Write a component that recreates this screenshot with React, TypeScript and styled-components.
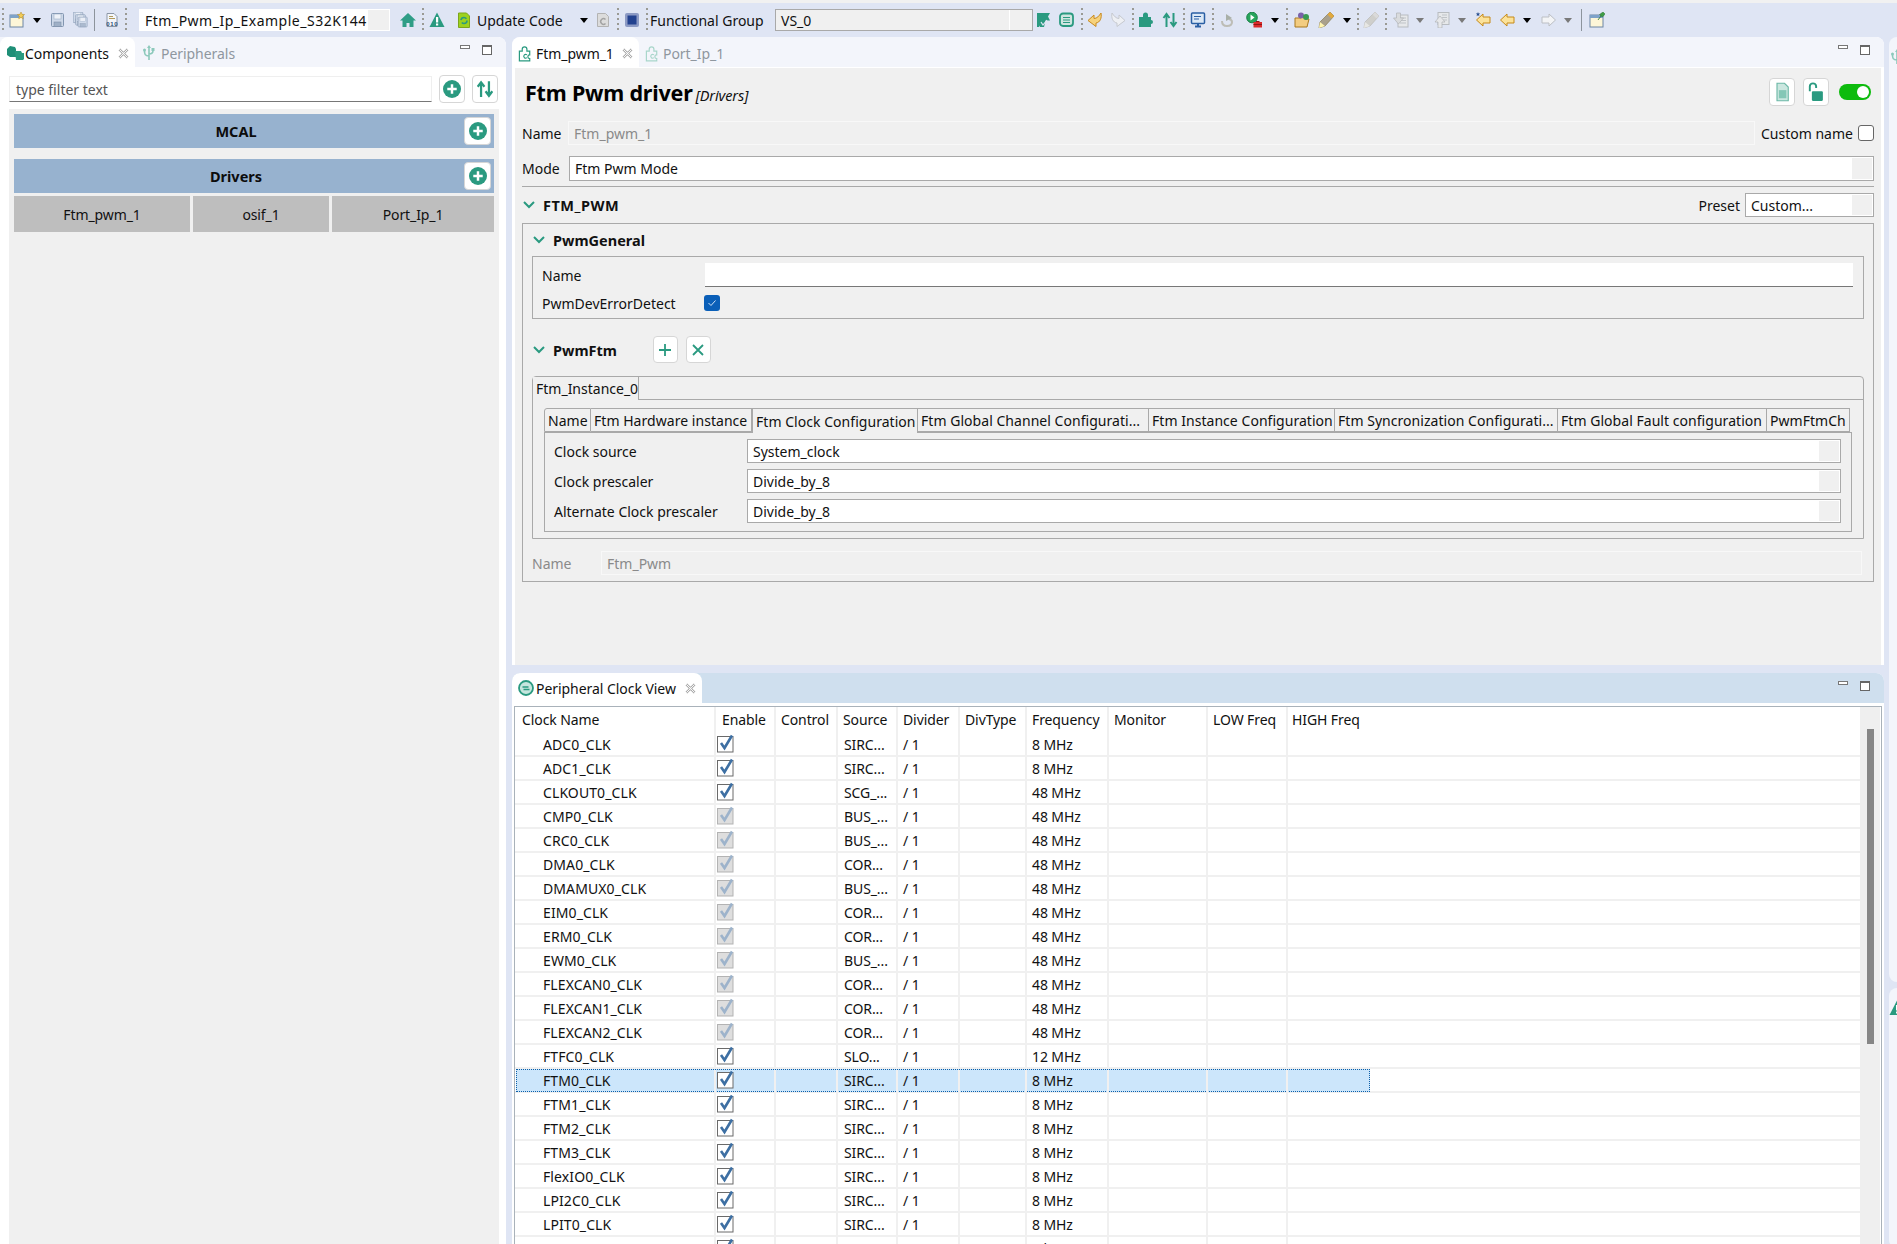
import React from "react";
import styled, { createGlobalStyle } from "styled-components";

const Global = createGlobalStyle`
  html, body { margin: 0; padding: 0; background: #dfe5f4; }
  body { font-family: "Noto Sans", "Open Sans", sans-serif; font-size: 14px; color: #111; }
  * { box-sizing: border-box; }
`;

const TEAL = "#2a9a80";

const Page = styled.div`
  width: 1897px; height: 1244px; overflow: hidden; display: flex; flex-direction: column;
  background: #dfe5f4; border-top: 3px solid #f1f1f1;
`;
const Toolbar = styled.div`
  height: 34px; flex: none; display: flex; align-items: center; padding-left: 2px; white-space: nowrap;
`;
const Slot = styled.span<{ $ml?: number; $w?: number }>`
  flex: none; display: inline-flex; align-items: center;
  margin-left: ${p => p.$ml ?? 0}px; ${p => (p.$w ? `width:${p.$w}px;` : "")}
`;
const Grip = styled.span<{ $ml?: number }>`
  flex: none; width: 2px; height: 24px; margin-left: ${p => p.$ml ?? 0}px;
  background: repeating-linear-gradient(to bottom, #9a9a94 0 2px, transparent 2px 5px);
`;
const Sep = styled.span<{ $ml?: number }>`
  flex: none; width: 1px; height: 22px; background: #8d949c; margin-left: ${p => p.$ml ?? 0}px;
`;
const Caret = styled.span<{ $ml?: number; $off?: boolean }>`
  flex: none; width: 0; height: 0; margin-left: ${p => p.$ml ?? 0}px;
  border-left: 4.5px solid transparent; border-right: 4.5px solid transparent;
  border-top: 5px solid ${p => (p.$off ? "#7a7a7a" : "#000")};
`;
const ToolLabel = styled.span<{ $ml?: number; $w: number }>`
  flex: none; width: ${p => p.$w}px; margin-left: ${p => p.$ml ?? 0}px; font-size: 14px; color: #111;
`;
const ToolCombo = styled.div<{ $ml: number; $w: number; $grey?: boolean }>`
  flex: none; width: ${p => p.$w}px; height: 22px; margin-left: ${p => p.$ml}px;
  display: flex; align-items: center; justify-content: space-between; font-size: 14px;
  background: ${p => (p.$grey ? "#f0f0f0" : "#fff")};
  border: 1px solid ${p => (p.$grey ? "#a9a9a9" : "transparent")};
  padding-left: 5px; overflow: hidden; letter-spacing: ${p => (p.$grey ? 0 : 0.5)}px;
  &::after { content: ""; width: 22px; height: 100%; background: #f0f0f0; border-left: 1px solid #fff; }
`;

const Workspace = styled.div`
  flex: 1; min-height: 0; display: flex;
`;
const LeftPanel = styled.section`
  width: 506px; flex: none; display: flex; flex-direction: column; background: #fff; border-radius: 0 8px 0 0; overflow: hidden;
`;
const RightColumn = styled.div`
  width: 1372px; flex: none; margin-left: 6px; display: flex; flex-direction: column;
`;
const Sliver = styled.div`
  width: 8px; margin-left: 5px; flex: none; display: flex; flex-direction: column; gap: 6px;
`;
const SliverPiece = styled.div<{ $h: number }>`
  height: ${p => p.$h}px; flex: none; background: #f3f5fb; border-radius: 8px 0 0 8px; padding-top: 12px; color: ${TEAL};
`;
const Header = styled.div<{ $active?: boolean }>`
  height: 30px; flex: none; display: flex; align-items: stretch;
  background: ${p => (p.$active ? "#cfdfee" : "#f3f5fb")};
  padding-right: 14px;
`;
const Tab = styled.div<{ $w: number; $on?: boolean; $pt?: number }>`
  width: ${p => p.$w}px; flex: none; display: flex; align-items: center; padding: ${p => p.$pt ?? 2}px 0 0 6px;
  font-size: 14px; letter-spacing: -0.05px; white-space: nowrap;
  color: ${p => (p.$on ? "#111" : "#8f979f")};
  background: ${p => (p.$on ? "#fff" : "transparent")};
  border-radius: ${p => (p.$on ? "8px 8px 0 0" : "0")};
  svg { flex: none; }
`;
const TabText = styled.span<{ $ml?: number }>`
  margin-left: ${p => p.$ml ?? 4}px;
`;
const CloseMark = styled.svg<{ $ml: number }>`
  margin-left: ${p => p.$ml}px;
`;
const PanelControls = styled.div`
  margin-left: auto; display: flex; align-items: flex-start; gap: 12px; padding-top: 8px;
`;
const MinBtn = styled.span`
  width: 10px; height: 4px; border: 1px solid #777; background: #fff;
`;
const MaxBtn = styled.span`
  width: 10px; height: 10px; border: 1px solid #666; border-top-width: 2px; background: #fff;
`;

const FilterRow = styled.div`
  height: 42px; flex: none; display: flex; align-items: flex-start; padding: 9px 0 0 9px;
`;
const FilterInput = styled.div`
  width: 423px; height: 26px; display: flex; align-items: center; padding-left: 6px;
  background: #fff; border: 1px solid #efefef; border-bottom: 1px solid #777; color: #555; font-size: 14px;
`;
const IconButton = styled.span<{ $ml?: number; $w?: number; $h?: number }>`
  flex: none; display: inline-flex; align-items: center; justify-content: center;
  width: ${p => p.$w ?? 26}px; height: ${p => p.$h ?? 28}px; margin-left: ${p => p.$ml ?? 0}px;
  background: #fff; border: 1px solid #d6d6d6; border-radius: 4px;
`;
const FilterButtons = styled.div`
  display: flex; margin-top: -1px;
`;
const ComponentList = styled.div`
  flex: 1; margin: 0 7px 0 9px; background: #f0f0f0; padding: 5px; display: flex; flex-direction: column;
`;
const CategoryBar = styled.div<{ $mt?: number }>`
  height: 34px; flex: none; margin-top: ${p => p.$mt ?? 0}px; position: relative; display: flex; align-items: center; justify-content: center;
  background: #97b2cf; font-weight: 700; font-size: 14.5px; color: #0c0c0c; padding-right: 36px;
  & > span:last-child { position: absolute; right: 3px; top: 3px; }
`;
const CellRow = styled.div`
  display: flex; gap: 3px; margin-top: 3px;
`;
const CompCell = styled.div<{ $w: number }>`
  width: ${p => p.$w}px; height: 36px; display: flex; align-items: center; justify-content: center;
  background: #bebebe; font-size: 14px; letter-spacing: -0.1px;
`;

const EditorPanel = styled.section`
  height: 628px; flex: none; display: flex; flex-direction: column; background: #fff; border-radius: 8px 8px 0 0; overflow: hidden;
`;
const EditorBody = styled.div`
  flex: 1; margin: 1px 3px 0 3px; background: #f0f0f0; padding: 0 7px; display: flex; flex-direction: column;
`;
const TitleRow = styled.div`
  height: 28px; margin-top: 10px; flex: none; display: flex; align-items: center; padding-left: 3px;
`;
const TitleGroup = styled.div`
  display: flex; align-items: center; padding-top: 1px;
`;
const Title = styled.h1`
  margin: 0; font-size: 21.5px; font-weight: 700; letter-spacing: -0.2px; color: #000;
`;
const TitleTag = styled.em`
  margin: 4px 0 0 3px; font-size: 14.5px; letter-spacing: -0.1px;
`;
const TitleActions = styled.div`
  margin-left: auto; display: flex; align-items: center; gap: 8px; padding-right: 3px;
`;
const Toggle = styled.span`
  width: 32px; height: 16px; border-radius: 8px; background: #0dbb0d; margin-left: 2px; display: flex; justify-content: flex-end; align-items: center; padding-right: 2px;
  &::after { content: ""; width: 12px; height: 12px; background: #fff; border-radius: 50%; }
`;
const FormRow = styled.div<{ $mt: number; $h?: number }>`
  display: flex; align-items: center; flex: none; margin-top: ${p => p.$mt}px; height: ${p => p.$h ?? 24}px;
`;
const Label = styled.span<{ $w?: number; $grey?: boolean; $pl?: number }>`
  flex: none; ${p => (p.$w ? `width:${p.$w}px;` : "")} padding-left: ${p => p.$pl ?? 0}px;
  font-size: 14px; color: ${p => (p.$grey ? "#8a8a8a" : "#111")}; white-space: nowrap;
`;
const PresetLabel = styled(Label)`
  margin-left: auto;
`;
const ReadField = styled.div<{ $w?: number; $ml?: number }>`
  ${p => (p.$w ? `width:${p.$w}px;` : "flex:1;")} margin-left: ${p => p.$ml ?? 0}px; height: 24px; display: flex; align-items: center; padding-left: 5px;
  background: #f0f0f0; border: 1px solid #f8f8f8; color: #8a8a8a; font-size: 14px;
`;
const Select = styled.div<{ $w?: number; $ml?: number; $h?: number }>`
  ${p => (p.$w ? `width:${p.$w}px;flex:none;` : "flex:1;")} margin-left: ${p => p.$ml ?? 0}px; height: ${p => p.$h ?? 24}px;
  display: flex; align-items: center; justify-content: space-between; padding-left: 5px; padding-right: 1px;
  background: #fff; border: 1px solid #a9a9a9; font-size: 14px; color: #111;
  &::after { content: ""; width: 20px; height: calc(100% - 2px); background: #f0f0f0; }
`;
const CustomCheck = styled.span`
  width: 16px; height: 16px; border: 1px solid #666; border-radius: 3px; background: #fff; flex: none;
`;
const Rule = styled.div`
  height: 1px; flex: none; margin-top: 5px; background: #a9a9a9;
`;
const SectionHead = styled.div<{ $mt?: number; $h?: number }>`
  display: flex; align-items: center; flex: none; height: ${p => p.$h ?? 24}px; margin-top: ${p => p.$mt ?? 0}px; font-weight: 700; font-size: 14.5px; color: #111; padding-left: 1px;
`;
const HeadText = styled.span<{ $ls?: number }>`
  margin-left: 8px; letter-spacing: ${p => p.$ls ?? 0}px;
`;
const OuterFrame = styled.div`
  height: 359px; flex: none; margin-top: 6px; border: 1px solid #a9a9a9; padding: 4px 9px 0 9px; display: flex; flex-direction: column;
`;
const GeneralBox = styled.div`
  height: 63px; flex: none; margin-top: 4px; border: 1px solid #a9a9a9; padding: 6px 10px 0 9px; display: flex; flex-direction: column;
`;
const TextInput = styled.div`
  flex: 1; height: 24px; background: #fff; border-bottom: 1px solid #777;
`;
const BlueCheck = styled.span`
  width: 16px; height: 16px; margin-left: -1px; border-radius: 3px; background: #0a5fb8; display: inline-flex; align-items: center; justify-content: center; flex: none;
`;
const Folder = styled.div`
  height: 163px; flex: none; margin-top: 13px; border: 1px solid #a9a9a9; border-radius: 4px 4px 0 0; display: flex; flex-direction: column;
`;
const FolderStrip = styled.div`
  height: 23px; flex: none; display: flex; border-bottom: 1px solid #a9a9a9;
`;
const FolderTab = styled.div`
  width: 106px; height: 23px; display: flex; align-items: center; padding-left: 3px; border-right: 1px solid #a9a9a9; background: #f0f0f0; font-size: 14px;
`;
const FolderBody = styled.div`
  padding: 8px 11px 0 11px;
`;
const InnerTabs = styled.div`
  display: flex; height: 25px;
`;
const InnerTab = styled.div<{ $w: number; $on?: boolean }>`
  width: ${p => p.$w}px; flex: none; height: ${p => (p.$on ? 25 : 24)}px; display: flex; align-items: center; padding-left: 3px; overflow: hidden; white-space: nowrap;
  border: 1px solid #a9a9a9; border-left-width: ${p => (p.$on ? 1 : 0)}px; border-bottom-width: ${p => (p.$on ? 0 : 1)}px;
  background: #f0f0f0; position: relative; font-size: 14px; letter-spacing: 0.04px;
  &:first-child { border-left-width: 1px; border-radius: 3px 0 0 0; }
`;
const InnerFrame = styled.div`
  height: 100px; margin-top: -1px; border: 1px solid #a9a9a9; border-top-color: #a9a9a9; padding: 6px 10px 0 9px; display: flex; flex-direction: column; gap: 6px;
`;
const InnerRow = styled.div`
  display: flex; align-items: center; height: 24px;
`;

const ClockPanel = styled.section`
  flex: 1; min-height: 0; margin-top: 8px; display: flex; flex-direction: column; background: #fff; border-radius: 8px 8px 0 0; overflow: hidden;
`;
const TableFrame = styled.div`
  flex: 1; min-height: 0; margin: 3px 2px 0 2px; border: 1px solid #a9b2ba; border-bottom: 0; display: flex; overflow: hidden;
`;
const Table = styled.div`
  flex: 1; min-width: 0; display: flex; flex-direction: column; padding-left: 0;
`;
const HeadRow = styled.div`
  height: 26px; flex: none; display: flex;
`;
const Row = styled.div`
  height: 24px; flex: none; display: flex; position: relative; border-bottom: 2px solid #f0f0f0;
`;
const SelBand = styled.div`
  display: flex; height: 23px; margin: 0 0 -1px 1px; background: #cce6fb; border: 1px dotted #0d5fa8; align-items: center;
  & > div:first-child { width: 199px; padding-left: 26px; }
  & > div:last-child { width: 81px; }
`;
const Cell = styled.div<{ $w: number; $pl?: number; $head?: boolean; $last?: boolean }>`
  width: ${p => p.$w}px; flex: none; height: ${p => (p.$head ? "26px" : "22px")}; display: flex; align-items: center; padding: 0 0 ${p => (p.$head ? 2 : 0)}px ${p => p.$pl ?? 0}px;
  border-right: ${p => (p.$last ? "0" : "2px solid #f0f0f0")}; white-space: nowrap; overflow: hidden; font-size: 14px; letter-spacing: -0.1px; color: #111;
`;
const NameCell = styled(Cell)`
  letter-spacing: 0.1px;
`;
const CheckWrap = styled.span`
  display: inline-flex; margin-top: -2px;
`;
const ScrollTrack = styled.div`
  width: 20px; flex: none; background: #efefef; padding: 22px 6px 0 7px; margin-right: 1px;
`;
const ScrollThumb = styled.div`
  width: 7px; height: 315px; background: #868686;
`;

const I = ({ children, w = 16, h = 16 }: { children: React.ReactNode; w?: number; h?: number }) => (
  <svg width={w} height={h} viewBox="0 0 16 16">{children}</svg>
);

const NewIcon = () => <I><rect x="1" y="3" width="13" height="12" fill="#fdf6d8" stroke="#6d86a4" /><rect x="1" y="3" width="13" height="3" fill="#7ea2c8" /><path d="M12 0l1 2.3 2.6.2-2 1.7.7 2.6L12 5.4 9.700 6.800l.7-2.600-2-1.700 2.600-.2z" fill="#f4cc55" stroke="#b28a2a" strokeWidth=".5" /></I>;
const SaveIcon = () => <g><rect x="1.500" y="1.500" width="12" height="13" rx="1" fill="#ced9e9" stroke="#8296b0" /><rect x="4" y="2" width="7" height="5" fill="#eef2f8" stroke="#9db0c6" strokeWidth=".6" /><rect x="4" y="10" width="7" height="4.500" fill="#9fb0c6" stroke="#7d90a8" strokeWidth=".6" /></g>;
const SaveAllIcon = () => <I><g opacity=".8"><g transform="translate(-1 -1) scale(.8)"><SaveIcon /></g><g transform="translate(1.500 1.500) scale(.8)"><SaveIcon /></g><g transform="translate(4 4) scale(.75)"><SaveIcon /></g></g></I>;
const BinaryIcon = () => <I><path d="M3 1.500h7l3 3v10H3z" fill="#f4f6fa" stroke="#8c97a6" /><path d="M5 4.500h4M5 6.500h6" stroke="#b19a5b" /><text x="2.200" y="13.500" fontSize="6" fontFamily="Liberation Sans" fontWeight="700" fill="#2c4e78" textLength="11.500">010</text></I>;
const HomeIcon = () => <I><path d="M8 1L0 8.500h2.500V15h4v-4h3v4h4V8.500H16z" fill="#2f9d86" /></I>;
const WarnIcon = () => <I><path d="M8 .5L.500 15h15z" fill="#2a9a80" /><rect x="7" y="5" width="2.200" height="5.500" fill="#fff" /><rect x="7" y="11.500" width="2.200" height="2" fill="#fff" /></I>;
const UpdateIcon = () => <I><path d="M2.500 1h8l3 3v11.500h-11z" fill="#9ed21e" stroke="#7da51c" /><circle cx="8" cy="8.500" r="3" fill="none" stroke="#2a9a80" strokeWidth="1.600" strokeDasharray="7 2.500" /></I>;
const CDocIcon = () => <I><path d="M2.500 1.500h8l3 3v10h-11z" fill="#dcdcdc" stroke="#b3b3b3" /><path d="M10.500 7.500a2.800 2.800 0 1 0 0 4" fill="none" stroke="#a3a3a3" strokeWidth="1.500" /></I>;
const ChipIcon = () => <I><rect x="1" y="1" width="14" height="14" rx="2" fill="#8c9ac4" /><rect x="3.500" y="3.500" width="9" height="9" fill="#22418f" /></I>;
const FlagIcon = () => <I><path d="M1 1h13l-2 3.500L14 8.500H9.500L8 15H4l-1-1.500V15H1z" fill="#2a9a80" /><path d="M5 10l2 3 4-5" fill="none" stroke="#dfe5f4" strokeWidth="1.200" /></I>;
const DocIcon = () => <I><rect x="1" y="1.500" width="13" height="12.500" rx="3" fill="#cfe5e0" stroke="#2a9a80" strokeWidth="1.800" /><path d="M4 5.500h7M4 8h7M4 10.500h7" stroke="#2a9a80" /></I>;
const BackArrow = () => <I><path d="M14 1C15 6 13 10.500 9 11v3.500L1 8.500 7 3v3.500C10 6.500 12 4 14 1z" fill="#f6d27c" stroke="#c98a1e" /></I>;
const ForwardFaded = () => <I><path d="M2 1C1 6 3 10.500 7 11v3.500L15 8.500 9 3v3.500C6 6.500 4 4 2 1z" fill="#eef0f4" stroke="#c6c9cf" /></I>;
const PuzzleIcon = () => <I><path d="M1 5h4V3a2.500 2.500 0 0 1 5 0v2h3v3a2 2 0 0 1 0 4v3H1z" fill={TEAL} /></I>;
const SortIcon = ({ s = 16 }: { s?: number }) => <I w={s} h={s}><path d="M4.500 15V3M1.500 6l3-4 3 4M11.500 1v12M8.500 10l3 4 3-4" fill="none" stroke={TEAL} strokeWidth="2" /></I>;
const MonitorIcon = () => <I><rect x="1.500" y="1" width="13" height="10.500" rx="1" fill="#dbe8f6" stroke="#2a5fa4" strokeWidth="1.500" /><path d="M4 4.500h7M4 7h5" stroke="#2a5fa4" /><path d="M5 14.500h6M8 11.500v3" stroke="#2a5fa4" strokeWidth="2" /></I>;
const ReplayIcon = () => <I><path d="M3 9c0 3 2 5 5 5s5-1.500 5-4c0-1.500-1-2.500-3-3" fill="none" stroke="#bdbdb6" strokeWidth="2" /><path d="M7 2l6 4-6 3z" fill="#a9b0a8" /></I>;
const RunIcon = () => <I><circle cx="6" cy="5.500" r="5.300" fill="#27a55c" stroke="#197f46" /><path d="M4.500 2.500l4 3-4 3z" fill="#fff" /><rect x="7.500" y="10" width="8.500" height="5.500" fill="#d92b2b" /><path d="M7.500 12.500h8.500M10 9.500h3.500" stroke="#8f1414" /></I>;
const FolderIcon = () => <I><path d="M1 6h6l1-1.500h3V7h4l-2 8H1z" fill="#f3cc80" stroke="#a9781e" /><circle cx="7" cy="3.500" r="3" fill="#7a62a8" /><circle cx="12" cy="5" r="3" fill="#3a9a52" /></I>;
const PenIcon = ({ off }: { off?: boolean }) => <I><path d="M12 0l4 4L7 14 1 16l1-6z" fill={off ? "#cfcfcc" : "#a9a08c"} stroke={off ? "#b9b9b6" : "#8a7d52"} strokeWidth=".7" /><path d="M9.500 2.500l4 4L16 4l-4-4z" fill={off ? "#dadada" : "#e3a93c"} /><path d="M1 16l1-6 5 4z" fill={off ? "#e7e7e4" : "#fff5b0"} /></I>;
const DownDoc = () => <I><rect x="5" y="3" width="10" height="12" fill="#e6e8ea" stroke="#b8bcc0" /><path d="M7 6h6M7 8.500h6M7 11h6" stroke="#bfc3c7" /><path d="M4 0h4v5h3l-5 6-5-6h3z" transform="translate(-.5 1)" fill="#d9dbdd" stroke="#b0b3b6" strokeWidth=".7" /></I>;
const UpDoc = () => <I><rect x="4" y="0.500" width="11" height="12" fill="#e6e8ea" stroke="#b8bcc0" /><path d="M8 3h5M8 5.500h5M9 8h4" stroke="#bfc3c7" /><path d="M4 16V10H1l5-6 5 6H8v6z" fill="#e7e8ea" stroke="#b0b3b6" strokeWidth=".7" /></I>;
const LeftArrow = ({ star }: { star?: boolean }) => <I><path d="M15 5v6H8v3L1.500 8 8 2v3z" fill="#fbe29a" stroke="#c78a16" />{star && <path d="M3 0l.6 1.500 1.600.1-1.200 1 .4 1.600L3 3.300l-1.400.9.4-1.600-1.200-1 1.600-.1z" fill="#2a4f8f" />}</I>;
const RightArrow = () => <I><path d="M1 5v6h7v3l6.500-6L8 2v3z" fill="#f3f4f6" stroke="#bcbfc4" /></I>;
const NoteIcon = () => <I><rect x="1" y="3" width="13" height="12" fill="#fdf6d8" stroke="#6d86a4" /><rect x="1" y="3" width="13" height="3" fill="#7ea2c8" /><path d="M9 8l3-4-1.500-1.500L14 0l2 2-2.500 3L12 4z" fill="#3f9d45" stroke="#25712b" strokeWidth=".5" /></I>;
const PlusCircle = () => <I w={18} h={18}><circle cx="8" cy="8" r="8" fill={TEAL} /><path d="M8 3.800v8.400M3.800 8h8.400" stroke="#fff" strokeWidth="2.200" /></I>;
const Chevron = () => <svg width="12" height="8" viewBox="0 0 12 8"><path d="M1 1l5 5 5-5" fill="none" stroke={TEAL} strokeWidth="2" /></svg>;
const Close = ({ ml }: { ml: number }) => <CloseMark $ml={ml} width="11" height="11" viewBox="0 0 12 12"><path d="M1.500 1.500l9 9M10.500 1.500l-9 9" stroke="#8a8a8a" strokeWidth="2.400" /><path d="M1.500 1.500l9 9M10.500 1.500l-9 9" stroke="#fff" strokeWidth="1.100" /></CloseMark>;
const CompIcon = () => <I w={18} h={16}><path d="M0 4l3-3 5 1 1 2v8H3L0 10z" fill="#1f8f77" /><path d="M8 6h6l1 2h3v5l-2 2H9z" fill="#2a9a80" /></I>;
const UsbIcon = () => <I><path d="M8 15V3M8 11C4 11 3.500 9 3.500 6M8 9c3.500 0 4-1.500 4-3.500" fill="none" stroke="#8cc9bb" strokeWidth="1.600" /><path d="M8 0l2 3H6z" fill="#8cc9bb" /><circle cx="3.500" cy="5" r="1.500" fill="#8cc9bb" /><rect x="10.500" y="3" width="3" height="3" fill="#8cc9bb" /></I>;
const PuzzleDoc = ({ off }: { off?: boolean }) => { const c = off ? "#a9d6cb" : TEAL; return <I w={15} h={18}><path d="M1.500 5h3V3a2.500 2.500 0 0 1 5 0v2h3v4a2 2 0 0 0 0 4v2.500h-11z" transform="translate(0 1)" fill="none" stroke={c} strokeWidth="1.300" /><path d="M9.500 10a2 2 0 1 0 0 3" fill="none" stroke={c} strokeWidth="1.200" /></I>; };
const ClockIcon = () => <I><circle cx="8" cy="8" r="7" fill="#c5e6de" stroke={TEAL} strokeWidth="1.800" /><path d="M4.500 7h6M5.500 9.500h6" stroke={TEAL} strokeWidth="1.300" /></I>;
const SheetIcon = () => <I w={20} h={20}><path d="M4 1h6l3 3v11H4z" fill="#cbe7e0" stroke="#6bb8a6" strokeWidth=".9" /><rect x="5.500" y="6.500" width="6" height="6.500" fill="#84c7b6" /></I>;
const LockOpenIcon = () => <I w={22} h={22}><path d="M3.500 7.500V4a2.300 2.300 0 0 1 4.600 0v1" fill="none" stroke={TEAL} strokeWidth="1.400" /><rect x="5" y="7.500" width="8" height="7" rx=".8" fill={TEAL} /></I>;
const TableCheck = ({ off }: { off?: boolean }) => (
  <svg width="18" height="19" viewBox="0 0 18 19">
    <rect x=".5" y="2.500" width="15.500" height="15.500" fill={off ? "#dedede" : "#fff"} stroke={off ? "#b3b3b3" : "#6a6a6a"} />
    <path d="M4 9l3.500 5L15 1.500" fill="none" stroke={off ? "#9db3cb" : "#3d6fa3"} strokeWidth="2.600" />
  </svg>
);

const widths = [201, 60, 62, 60, 62, 67, 82, 99, 80, 82];
const heads = ["Clock Name", "Enable", "Control", "Source", "Divider", "DivType", "Frequency", "Monitor", "LOW Freq", "HIGH Freq"];
const pads = [7, 6, 5, 5, 5, 5, 5, 5, 5, 4];

type R = [string, string, string, boolean, string?];
const rows: R[] = [
  ["ADC0_CLK", "SIRC...", "8 MHz", false],
  ["ADC1_CLK", "SIRC...", "8 MHz", false],
  ["CLKOUT0_CLK", "SCG_...", "48 MHz", false],
  ["CMP0_CLK", "BUS_...", "48 MHz", true],
  ["CRC0_CLK", "BUS_...", "48 MHz", true],
  ["DMA0_CLK", "COR...", "48 MHz", true],
  ["DMAMUX0_CLK", "BUS_...", "48 MHz", true],
  ["EIM0_CLK", "COR...", "48 MHz", true],
  ["ERM0_CLK", "COR...", "48 MHz", true],
  ["EWM0_CLK", "BUS_...", "48 MHz", true],
  ["FLEXCAN0_CLK", "COR...", "48 MHz", true],
  ["FLEXCAN1_CLK", "COR...", "48 MHz", true],
  ["FLEXCAN2_CLK", "COR...", "48 MHz", true],
  ["FTFC0_CLK", "SLO...", "12 MHz", false],
  ["FTM0_CLK", "SIRC...", "8 MHz", false],
  ["FTM1_CLK", "SIRC...", "8 MHz", false],
  ["FTM2_CLK", "SIRC...", "8 MHz", false],
  ["FTM3_CLK", "SIRC...", "8 MHz", false],
  ["FlexIO0_CLK", "SIRC...", "8 MHz", false],
  ["LPI2C0_CLK", "SIRC...", "8 MHz", false],
  ["LPIT0_CLK", "SIRC...", "8 MHz", false],
  ["LPO_1K_CLK", "LPO...", "1 kHz", false, "/ 100"],
];

const innerTabs: [string, number, boolean?][] = [
  ["Name", 47], ["Ftm Hardware instance", 161], ["Ftm Clock Configuration", 166, true],
  ["Ftm Global Channel Configurati...", 231], ["Ftm Instance Configuration", 186], ["Ftm Syncronization Configurati...", 223],
  ["Ftm Global Fault configuration", 209], ["PwmFtmCh", 83],
];

const Controls = () => <PanelControls><MinBtn /><MaxBtn /></PanelControls>;

const ClockRow = ({ r }: { r: R }) => {
  const cells = (
    <>
      <NameCell $w={widths[0]} $pl={28}>{r[0]}</NameCell>
      <Cell $w={widths[1]} $pl={1}><CheckWrap><TableCheck off={r[3]} /></CheckWrap></Cell>
      <Cell $w={widths[2]} />
      <Cell $w={widths[3]} $pl={6}>{r[1]}</Cell>
      <Cell $w={widths[4]} $pl={5}>{r[4] ?? "/ 1"}</Cell>
      <Cell $w={widths[5]} />
      <Cell $w={widths[6]} $pl={5}>{r[2]}</Cell>
      <Cell $w={widths[7]} />
      <Cell $w={widths[8]} />
      <Cell $w={widths[9]} $last />
    </>
  );
  return <Row>{r[0] === "FTM0_CLK" ? <SelBand>{cells}</SelBand> : cells}</Row>;
};

export default function App() {
  return (
    <Page>
      <Global />
      <Toolbar>
        <Grip />
        <Slot $ml={5}><NewIcon /></Slot>
        <Caret $ml={8} />
        <Slot $ml={9}><I><SaveIcon /></I></Slot>
        <Slot $ml={7}><SaveAllIcon /></Slot>
        <Sep $ml={5} />
        <Slot $ml={9}><BinaryIcon /></Slot>
        <Grip $ml={5} />
        <ToolCombo $ml={12} $w={251}>Ftm_Pwm_Ip_Example_S32K144</ToolCombo>
        <Slot $ml={10}><HomeIcon /></Slot>
        <Grip $ml={6} />
        <Slot $ml={5}><WarnIcon /></Slot>
        <Slot $ml={11}><UpdateIcon /></Slot>
        <ToolLabel $ml={5} $w={86}>Update Code</ToolLabel>
        <Caret $ml={17} />
        <Slot $ml={7}><CDocIcon /></Slot>
        <Grip $ml={6} />
        <Slot $ml={5}><ChipIcon /></Slot>
        <Grip $ml={6} />
        <ToolLabel $ml={2} $w={112}>Functional Group</ToolLabel>
        <ToolCombo $ml={13} $w={258} $grey>VS_0</ToolCombo>
        <Slot $ml={3}><FlagIcon /></Slot>
        <Slot $ml={7}><DocIcon /></Slot>
        <Grip $ml={6} />
        <Slot $ml={4}><BackArrow /></Slot>
        <Slot $ml={7}><ForwardFaded /></Slot>
        <Grip $ml={6} />
        <Slot $ml={4}><PuzzleIcon /></Slot>
        <Slot $ml={8}><SortIcon /></Slot>
        <Grip $ml={5} />
        <Slot $ml={5}><MonitorIcon /></Slot>
        <Grip $ml={6} />
        <Slot $ml={5}><ReplayIcon /></Slot>
        <Slot $ml={11}><RunIcon /></Slot>
        <Caret $ml={9} />
        <Grip $ml={7} />
        <Slot $ml={6}><FolderIcon /></Slot>
        <Slot $ml={8}><PenIcon /></Slot>
        <Caret $ml={9} />
        <Grip $ml={6} />
        <Slot $ml={4}><PenIcon off /></Slot>
        <Grip $ml={6} />
        <Slot $ml={6}><DownDoc /></Slot>
        <Caret $ml={7} $off />
        <Slot $ml={10}><UpDoc /></Slot>
        <Caret $ml={8} $off />
        <Slot $ml={9}><LeftArrow star /></Slot>
        <Slot $ml={8}><LeftArrow /></Slot>
        <Caret $ml={8} />
        <Slot $ml={10}><RightArrow /></Slot>
        <Caret $ml={7} $off />
        <Sep $ml={9} />
        <Slot $ml={7}><NoteIcon /></Slot>
      </Toolbar>
      <Workspace>
        <LeftPanel>
          <Header>
            <Tab $w={135} $on><CompIcon /><TabText $ml={1}>Components</TabText><Close ml={9} /></Tab>
            <Tab $w={120}><UsbIcon /><TabText>Peripherals</TabText></Tab>
            <Controls />
          </Header>
          <FilterRow>
            <FilterInput>type filter text</FilterInput>
            <FilterButtons>
              <IconButton $ml={7}><PlusCircle /></IconButton>
              <IconButton $ml={7}><SortIcon s={18} /></IconButton>
            </FilterButtons>
          </FilterRow>
          <ComponentList>
            <CategoryBar>MCAL<IconButton $w={27}><PlusCircle /></IconButton></CategoryBar>
            <CategoryBar $mt={11}>Drivers<IconButton $w={27}><PlusCircle /></IconButton></CategoryBar>
            <CellRow>
              <CompCell $w={176}>Ftm_pwm_1</CompCell>
              <CompCell $w={136}>osif_1</CompCell>
              <CompCell $w={162}>Port_Ip_1</CompCell>
            </CellRow>
          </ComponentList>
        </LeftPanel>
        <RightColumn>
          <EditorPanel>
            <Header>
              <Tab $w={127} $on><PuzzleDoc /><TabText $ml={3}>Ftm_pwm_1</TabText><Close ml={8} /></Tab>
              <Tab $w={120}><PuzzleDoc off /><TabText $ml={3}>Port_Ip_1</TabText></Tab>
              <Controls />
            </Header>
            <EditorBody>
              <TitleRow>
                <TitleGroup>
                  <Title>Ftm Pwm driver</Title>
                  <TitleTag>[Drivers]</TitleTag>
                </TitleGroup>
                <TitleActions>
                  <IconButton><SheetIcon /></IconButton>
                  <IconButton><LockOpenIcon /></IconButton>
                  <Toggle />
                </TitleActions>
              </TitleRow>
              <FormRow $mt={15}>
                <Label $w={46}>Name</Label>
                <ReadField>Ftm_pwm_1</ReadField>
                <Label $w={103} $pl={6}>Custom name</Label>
                <CustomCheck />
              </FormRow>
              <FormRow $mt={11} $h={25}>
                <Label $w={47}>Mode</Label>
                <Select $h={25}>Ftm Pwm Mode</Select>
              </FormRow>
              <Rule />
              <FormRow $mt={6}>
                <SectionHead><Chevron /><HeadText $ls={0.5}>FTM_PWM</HeadText></SectionHead>
                <PresetLabel>Preset</PresetLabel>
                <Select $w={129} $ml={5}>Custom...</Select>
              </FormRow>
              <OuterFrame>
                <SectionHead><Chevron /><HeadText>PwmGeneral</HeadText></SectionHead>
                <GeneralBox>
                  <FormRow $mt={0}>
                    <Label $w={163}>Name</Label>
                    <TextInput />
                  </FormRow>
                  <FormRow $mt={8} $h={16}>
                    <Label $w={163}>PwmDevErrorDetect</Label>
                    <BlueCheck>
                      <svg width="10" height="10" viewBox="0 0 10 10"><path d="M1.500 5l2.500 2.500 4.500-5" fill="none" stroke="#cfe2f7" strokeWidth="1" /></svg>
                    </BlueCheck>
                  </FormRow>
                </GeneralBox>
                <SectionHead $mt={17} $h={27}>
                  <Chevron /><HeadText>PwmFtm</HeadText>
                  <IconButton $ml={36} $w={25} $h={27}>
                    <svg width="16" height="16" viewBox="0 0 16 16"><path d="M8 2v12M2 8h12" stroke={TEAL} strokeWidth="1.800" /></svg>
                  </IconButton>
                  <IconButton $ml={8} $w={25} $h={27}>
                    <svg width="14" height="14" viewBox="0 0 14 14"><path d="M2 2l10 10M12 2L2 12" stroke={TEAL} strokeWidth="1.800" /></svg>
                  </IconButton>
                </SectionHead>
                <Folder>
                  <FolderStrip><FolderTab>Ftm_Instance_0</FolderTab></FolderStrip>
                  <FolderBody>
                    <InnerTabs>
                      {innerTabs.map(([t, w, on]) => <InnerTab key={t} $w={w} $on={on}>{t}</InnerTab>)}
                    </InnerTabs>
                    <InnerFrame>
                      <InnerRow><Label $w={193}>Clock source</Label><Select>System_clock</Select></InnerRow>
                      <InnerRow><Label $w={193}>Clock prescaler</Label><Select>Divide_by_8</Select></InnerRow>
                      <InnerRow><Label $w={193}>Alternate Clock prescaler</Label><Select>Divide_by_8</Select></InnerRow>
                    </InnerFrame>
                  </FolderBody>
                </Folder>
                <FormRow $mt={12}>
                  <Label $w={69} $grey>Name</Label>
                  <ReadField $w={1261}>Ftm_Pwm</ReadField>
                </FormRow>
              </OuterFrame>
            </EditorBody>
          </EditorPanel>
          <ClockPanel>
            <Header $active>
              <Tab $w={190} $on $pt={0}><ClockIcon /><TabText $ml={2}>Peripheral Clock View</TabText><Close ml={9} /></Tab>
              <Controls />
            </Header>
            <TableFrame>
              <Table>
                <HeadRow>
                  {heads.map((h, i) => <Cell key={h} $head $w={widths[i]} $pl={pads[i]} $last={i === 9}>{h}</Cell>)}
                </HeadRow>
                {rows.map(r => <ClockRow key={r[0]} r={r} />)}
              </Table>
              <ScrollTrack><ScrollThumb /></ScrollTrack>
            </TableFrame>
          </ClockPanel>
        </RightColumn>
        <Sliver>
          <SliverPiece $h={945}><UsbIcon /></SliverPiece>
          <SliverPiece $h={260}><WarnIcon /></SliverPiece>
        </Sliver>
      </Workspace>
    </Page>
  );
}
